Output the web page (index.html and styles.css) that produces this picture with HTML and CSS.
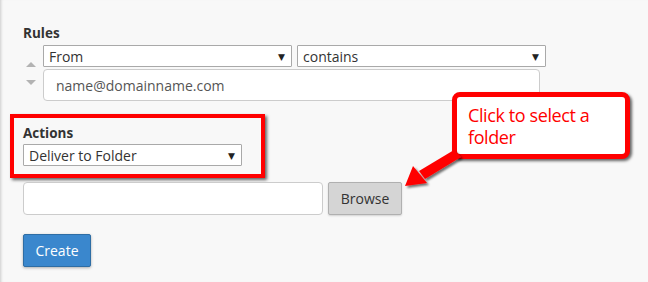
FILE: index.html
```html
<!DOCTYPE html>
<html>
<head>
<meta charset="utf-8">
<link rel="stylesheet" href="styles.css">
</head>
<body>
<div class="page">
  <div class="label rules-label">Rules</div>
  <div class="rules">
    <div class="sorter">
      <span class="tri up"></span>
      <span class="tri down"></span>
    </div>
    <div class="rule-fields">
      <div class="select-row">
        <div class="sel w249"><span>From</span><span class="caret">▼</span></div>
        <div class="sel w249"><span>contains</span><span class="caret">▼</span></div>
      </div>
      <div class="input email">name@domainname.com</div>
    </div>
  </div>
  <div class="highlight">
    <div class="label">Actions</div>
    <div class="sel w219"><span>Deliver to Folder</span><span class="caret">▼</span></div>
  </div>
  <div class="folder-row">
    <div class="input folder"></div>
    <div class="btn browse">Browse</div>
  </div>
  <div class="btn create">Create</div>
</div>
<div class="callout">Click to select a<br>folder</div>
<svg class="arrow" width="80" height="52" viewBox="0 0 80 52">
  <defs>
    <filter id="sh" x="-20%" y="-20%" width="140%" height="140%">
      <feDropShadow dx="2" dy="2" stdDeviation="1.2" flood-color="#000" flood-opacity="0.55"/>
    </filter>
  </defs>
  <g filter="url(#sh)" fill="#ff0000">
    <polygon points="22,29 57,8 64,15 28,37"/>
    <polygon points="8,44 16,24 30,41"/>
  </g>
</svg>
</body>
</html>
```
FILE: styles.css
```css
html, body {
  margin: 0;
  padding: 0;
}
body {
  width: 648px;
  height: 282px;
  background: #f8f8f8;
  box-shadow: inset 3px 0 3px -2px rgba(0,0,0,0.18);
  font-family: "Open Sans", "DejaVu Sans", sans-serif;
  color: #333;
  position: relative;
  overflow: hidden;
}
.page {
  padding: 24px 0 0 23px;
  display: flex;
  flex-direction: column;
  align-items: flex-start;
}
.label {
  font-weight: bold;
  font-size: 13.5px;
  line-height: 18px;
  color: #333;
}
.rules-label {
  margin-bottom: 3px;
}
.rules {
  display: flex;
}
.sorter {
  width: 20px;
  display: flex;
  flex-direction: column;
  align-items: flex-start;
  padding-left: 3px;
  box-sizing: border-box;
  padding-top: 17px;
}
.tri {
  width: 0;
  height: 0;
  border-left: 5px solid transparent;
  border-right: 5px solid transparent;
}
.tri.up {
  border-bottom: 5px solid #b3b3b3;
}
.tri.down {
  border-top: 5px solid #b3b3b3;
  margin-top: 13px;
}
.rule-fields {
  display: flex;
  flex-direction: column;
  gap: 2px;
}
.select-row {
  display: flex;
  gap: 5px;
}
.sel {
  height: 22px;
  box-sizing: border-box;
  border: 1px solid #a9a9a9;
  background: #fff;
  display: flex;
  align-items: center;
  justify-content: space-between;
  padding: 0 5px 0 5px;
  font-size: 14px;
  color: #333;
  border-radius: 1px;
}
.caret {
  font-size: 9px;
  color: #222;
  padding-right: 1px;
}
.w249 { width: 249px; }
.w219 { width: 219px; }
.input {
  box-sizing: border-box;
  border: 1px solid #ccc;
  border-radius: 4px;
  background: #fff;
}
.email {
  width: 497px;
  height: 32px;
  display: flex;
  align-items: center;
  padding-left: 12px;
  font-size: 14px;
  color: #555;
}
.highlight {
  margin-top: 13px;
  margin-left: -13px;
  width: 255px;
  height: 64px;
  box-sizing: border-box;
  border: 4px solid #ff0000;
  box-shadow: 2px 2px 3px rgba(0,0,0,0.6);
  padding: 6px 0 0 9px;
  display: flex;
  flex-direction: column;
  gap: 2px;
}
.folder-row {
  margin-top: 4px;
  display: flex;
  gap: 5px;
}
.folder {
  width: 300px;
  height: 33px;
}
.btn {
  box-sizing: border-box;
  height: 33px;
  display: flex;
  align-items: center;
  justify-content: center;
  font-size: 14px;
  border-radius: 2px;
}
.browse {
  width: 74px;
  background: #d5d5d5;
  border: 1px solid #b0b0b0;
  color: #333;
  box-shadow: 0 1px 2px rgba(0,0,0,0.15);
}
.create {
  margin-top: 19px;
  width: 68px;
  background: #3a87cd;
  border: 1px solid #2e6da4;
  color: #fff;
  box-shadow: 0 1px 3px rgba(0,0,0,0.3);
}
.callout {
  position: absolute;
  left: 452px;
  top: 92px;
  width: 178px;
  height: 67px;
  box-sizing: border-box;
  border: 5px solid #ff0000;
  border-radius: 8px;
  background: #fff;
  box-shadow: 2px 2px 3px rgba(0,0,0,0.6);
  color: #ff0000;
  font-size: 18px;
  letter-spacing: -0.4px;
  line-height: 22px;
  padding: 7px 0 0 11px;
}
.arrow {
  position: absolute;
  left: 397px;
  top: 142px;
}
```
